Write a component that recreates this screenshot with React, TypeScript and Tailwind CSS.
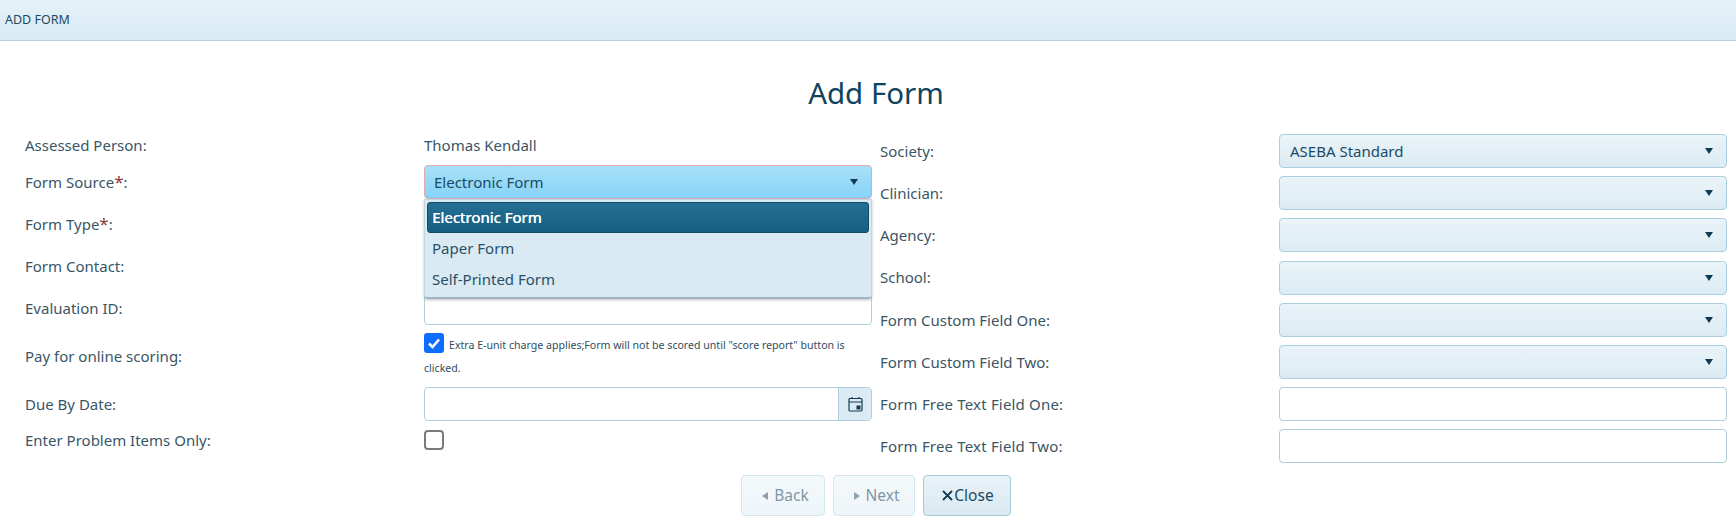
import React from "react";

const font = { fontFamily: '"Noto Sans", sans-serif' };

const Caret = () => (
  <svg width="8" height="6" viewBox="0 0 8 6" className="shrink-0">
    <path d="M0 0 H8 L4 6 Z" fill="#0f3a52" />
  </svg>
);

const Select = ({ value = "", active = false }: { value?: string; active?: boolean }) => (
  <div
    className={
      "h-[34px] w-full rounded-[4px] border flex items-center justify-between pr-[13px] text-[15px] text-[#1c4a63] " +
      (active
        ? "pl-[9px] border-[#e0aab4] bg-gradient-to-b from-[#a8e0f8] to-[#86d3f8]"
        : "pl-[10px] border-[#a9cfe0] bg-gradient-to-b from-[#eaf4f9] to-[#dcebf3]")
    }
  >
    <span>{value}</span>
    <Caret />
  </div>
);

const TextInput = () => <div className="h-[34px] w-full rounded-[4px] border border-[#b0cfdc] bg-white" />;

const Row = ({
  label,
  required,
  h = "h-[42px]",
  wide,
  children,
}: {
  label: string;
  required?: boolean;
  h?: string;
  wide?: boolean;
  children?: React.ReactNode;
}) => (
  <div className={"flex items-center " + h}>
    <div className={"w-[399px] shrink-0 text-[15px] text-[#3a5666] whitespace-nowrap " + (wide ? "tracking-[0.18px]" : "")}>
      {label}
      {required && <span className="text-[#8a3a3a] text-[17px] leading-none">*</span>}
      {required && ":"}
    </div>
    <div className="flex-1 min-w-0">{children}</div>
  </div>
);

export default function App() {
  return (
    <div className="h-[532px] w-[1736px] bg-white overflow-hidden" style={font}>
      <div className="h-[41px] border-b border-[#b4cfde] bg-gradient-to-b from-[#e4f1f8] to-[#d9eaf4] flex items-center pl-[5px] text-[12.5px] text-[#24495f]">
        ADD FORM
      </div>
      <h1 className="mt-[27px] h-[49px] pl-[16px] text-center text-[29.5px] leading-[49px] text-[#0f4460]">Add Form</h1>

      <div className="mt-[12px] pl-[25px] pr-[9px] flex gap-[8px]">
        <div className="w-[847px] shrink-0">
          <Row label="Assessed Person:" h="h-[32px]">
            <span className="text-[15px] text-[#3a5666]">Thomas Kendall</span>
          </Row>
          <div className="relative">
            <Row label="Form Source" required>
              <Select value="Electronic Form" active />
            </Row>
            <Row label="Form Type" required>
              <Select />
            </Row>
            <Row label="Form Contact:">
              <Select />
            </Row>
            <div className="absolute left-[399px] top-[38px] w-[448px] h-[100px] rounded-b-[4px] bg-[#d9eaf3] border border-[#c2d6e0] border-b-[2px] border-b-[#a3b4bf] shadow-[0_1px_3px_rgba(0,0,0,0.25)] pt-[2px] px-[2px] text-[15px]">
              <div className="h-[31px] rounded-[3px] border border-[#124a68] bg-gradient-to-b from-[#256f94] to-[#155f83] text-white [text-shadow:0.4px_0_0_white] flex items-center pl-[4px]">
                Electronic Form
              </div>
              <div className="h-[31px] flex items-center pl-[5px] text-[#2a5068]">Paper Form</div>
              <div className="h-[31px] flex items-center pl-[5px] text-[#2a5068]">Self-Printed Form</div>
            </div>
          </div>
          <Row label="Evaluation ID:">
            <TextInput />
          </Row>
          <Row label="Pay for online scoring:" h="h-[54px]">
            <div className="text-[10.6px] leading-[23px] text-[#2f4d5e]">
              <span className="inline-flex align-[-2px] w-[20px] h-[20px] rounded-[3px] bg-[#0d6efd] items-center justify-center mr-[5px]">
                <svg width="16" height="16" viewBox="0 0 16 16" fill="none">
                  <path d="M3 8.5 L6.5 12 L13 4.5" stroke="white" strokeWidth="2.6" />
                </svg>
              </span>
              Extra E-unit charge applies;Form will not be scored until "score report" button is clicked.
            </div>
          </Row>
          <Row label="Due By Date:">
            <div className="h-[34px] w-full rounded-[4px] border border-[#b0cfdc] bg-white flex justify-end">
              <div className="w-[33px] h-full border-l border-[#b0cfdc] bg-[#dcebf3] rounded-r-[3px] flex items-center justify-center">
                <svg width="15" height="16" viewBox="0 0 15 16" fill="none">
                  <rect x="1" y="2.5" width="13" height="12.5" rx="1" stroke="#123d55" strokeWidth="1.2" />
                  <path d="M1 6 H14 M4 1 V3 M11 1 V3" stroke="#123d55" strokeWidth="1.2" />
                  <rect x="8.5" y="9.5" width="4" height="4" fill="#123d55" />
                </svg>
              </div>
            </div>
          </Row>
          <Row label="Enter Problem Items Only:" h="h-[30px]">
            <div className="w-[20px] h-[20px] rounded-[4px] border-2 border-[#7a7a7a] bg-white" />
          </Row>
        </div>

        <div className="flex-1 min-w-0 pt-[1px]">
          <Row label="Society:">
            <Select value="ASEBA Standard" />
          </Row>
          <Row label="Clinician:">
            <Select />
          </Row>
          <Row label="Agency:">
            <Select />
          </Row>
          <Row label="School:" h="h-[43px]">
            <Select />
          </Row>
          <Row label="Form Custom Field One:">
            <Select />
          </Row>
          <Row label="Form Custom Field Two:">
            <Select />
          </Row>
          <Row label="Form Free Text Field One:" wide>
            <TextInput />
          </Row>
          <Row label="Form Free Text Field Two:" wide>
            <TextInput />
          </Row>
        </div>
      </div>

      <div className="mt-[8px] flex justify-center gap-[8px] text-[15.5px] pl-[16px]">
        <div className="w-[84px] h-[41px] pl-[5px] rounded-[4px] border border-[#d3e5ee] bg-gradient-to-b from-[#f4f9fb] to-[#eef5f9] flex items-center justify-center text-[#7f98a6]">
          <svg width="7" height="8" viewBox="0 0 7 8" className="mr-[5px]"><path d="M6 0 V8 L0 4 Z" fill="#8ba2af" /></svg>
          Back
        </div>
        <div className="w-[82px] h-[41px] pl-[5px] rounded-[4px] border border-[#d3e5ee] bg-gradient-to-b from-[#f4f9fb] to-[#eef5f9] flex items-center justify-center text-[#7f98a6]">
          <svg width="7" height="8" viewBox="0 0 7 8" className="mr-[5px]"><path d="M1 0 V8 L7 4 Z" fill="#8ba2af" /></svg>
          Next
        </div>
        <div className="w-[88px] h-[41px] pl-[2px] rounded-[4px] border border-[#a9c9d8] bg-gradient-to-b from-[#e9f3f8] to-[#d9e9f1] flex items-center justify-center text-[#1c4a63]">
          <svg width="11" height="11" viewBox="0 0 11 11" className="mr-[1px]"><path d="M1 1 L10 10 M10 1 L1 10" stroke="#123d55" strokeWidth="1.8" /></svg>
          Close
        </div>
      </div>
    </div>
  );
}
